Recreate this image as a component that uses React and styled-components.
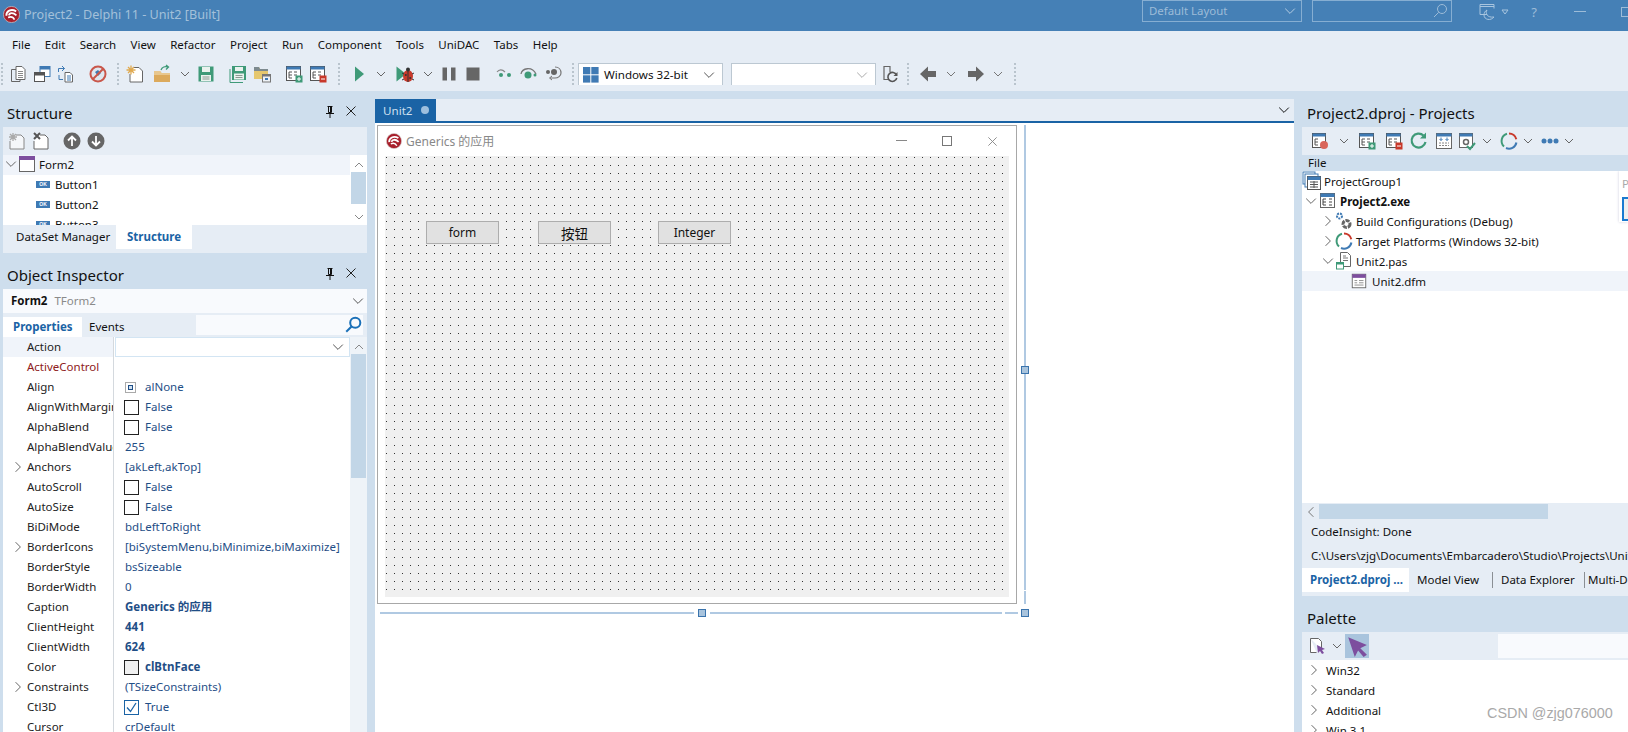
import React from "react";
import styled, { createGlobalStyle } from "styled-components";

const FONT = `"Noto Sans", "Noto Sans CJK SC", sans-serif`;
const C = { title: "#4580b6", band: "#e6edf5", dock: "#cedeed", soft: "#f0f4fa", blue: "#1a63a5", val: "#1f4e86", thumb: "#c2d6e7" };

const Global = createGlobalStyle`
  html, body { margin: 0; padding: 0; height: 100%; overflow: hidden; }
  body { font-family: ${FONT}; font-size: 11.5px; color: #111; background: ${C.dock}; }
  #root { height: 100%; }
  * { box-sizing: border-box; }
  svg { display: block; flex: none; }
`;

const Page = styled.div`height: 732px; width: 1628px; display: flex; flex-direction: column; position: relative; overflow: hidden;`;

/* title bar */
const TitleBar = styled.header`height: 31px; width: calc(100% + 8px); background: ${C.title}; display: flex; align-items: flex-start; flex: none; padding-left: 3px;`;
const LogoSlot = styled.div`width: 21px; height: 28px; display: flex; align-items: center;`;
const AppTitle = styled.div`color: #a3c0da; font-size: 12.6px; line-height: 29px;`;
const TitleSpacer = styled.div`flex: 1;`;
const LayoutCombo = styled.div`width: 160px; height: 22px; border: 1px solid #86aed2; color: #9dbcd8; font-size: 11.4px; line-height: 20px; padding-left: 6px; display: flex; justify-content: space-between; align-items: center; padding-right: 5px; flex: none;`;
const SearchCombo = styled.div`width: 140px; height: 22px; margin-left: 10px; border: 1px solid #86aed2; display: flex; justify-content: flex-end; align-items: center; padding-right: 3px; flex: none;`;
const CaptionBtn = styled.div`width: ${p => p.$w}px; margin-left: ${p => p.$ml || 0}px; height: 24px; display: flex; align-items: center; justify-content: center; color: #9dbcd8; font-size: 13px; flex: none;`;

/* menu and toolbar */
const TopBand = styled.div`height: 60px; background: ${C.band}; flex: none;`;
const MenuBar = styled.nav`height: 27px; display: flex; align-items: center; padding: 0 0 0 12px; gap: 14.4px;`;
const MenuItem = styled.span`color: #111;`;
const ToolBar = styled.div`height: 33px; display: flex; align-items: flex-start; padding-top: 5px;`;
const Tool = styled.div`width: ${p => p.$w || 24}px; height: 22px; margin-left: ${p => p.$ml || 0}px; display: flex; align-items: center; justify-content: center;`;
const Sep = styled.div`width: 2px; height: 22px; margin-left: ${p => p.$ml || 0}px; background: repeating-linear-gradient(#b9c4cd 0 2px, transparent 2px 4px);`;
const Combo = styled.div`width: 145px; height: 22px; margin-left: ${p => p.$ml || 0}px; background: #fff; border: 1px solid #bcc8d2; border-bottom: 0; display: flex; align-items: center; padding: 0 7px 0 4px; gap: 5px; font-size: 11.6px;`;
const ComboText = styled.span`flex: 1; color: #111; white-space: nowrap; margin-bottom: 1px;`;

/* workspace */
const Workspace = styled.div`flex: 1; min-height: 0; display: flex; padding-top: 8px; background: ${C.dock};`;
const LeftDock = styled.aside`width: 375px; flex: none; padding: 0 8px 0 3px; display: flex; flex-direction: column;`;
const RightDock = styled.aside`flex: 1; min-width: 0; padding-left: 8px; display: flex; flex-direction: column;`;
const DockHead = styled.div`height: ${p => p.$h}px; padding: ${p => p.$pt || 0}px 0 0 ${p => p.$pl}px; display: flex; align-items: center; justify-content: space-between; font-size: 15px; color: #111; flex: none;`;
const HeadBtns = styled.div`display: flex; gap: 9px; padding-right: 10px; margin-bottom: 2px;`;
const IconBar = styled.div`height: 28px; background: ${C.band}; display: flex; align-items: center; flex: none;`;
const IconSlot = styled.div`width: ${p => p.$w || 24}px; margin-left: ${p => p.$ml || 0}px; height: 24px; display: flex; align-items: center; justify-content: center; background: ${p => p.$on ? "#a9c4dd" : "transparent"};`;
const TreeArea = styled.div`height: ${p => p.$h}px; background: #fff; display: flex; overflow: hidden; flex: none;`;
const TreeBody = styled.div`flex: 1; min-width: 0;`;
const Row = styled.div`height: 20px; display: flex; align-items: center; padding-left: ${p => p.$indent || 0}px; background: ${p => p.$soft ? C.soft : "transparent"}; font-weight: ${p => p.$bold ? 700 : 400}; color: #111; white-space: nowrap;`;
const StructRow = styled(Row)`padding-bottom: 2px;`;
const RowChevron = styled.div`width: ${p => p.$w || 16}px; margin-right: ${p => p.$mr || 0}px; display: flex; justify-content: center; flex: none;`;
const RowIcon = styled.div`width: ${p => p.$w || 16}px; margin-right: ${p => p.$mr ?? 4}px; display: flex; justify-content: center; flex: none;`;
const VScroll = styled.div`width: 17px; flex: none; background: ${p => p.$track || "#fff"}; display: flex; flex-direction: column; align-items: center; padding-top: 5px;`;
const Thumb = styled.div`width: 15px; height: ${p => p.$h}px; margin-top: ${p => p.$mt}px; margin-bottom: ${p => p.$mb || 0}px; background: ${C.thumb}; flex: none;`;
const TabBar = styled.div`height: ${p => p.$h}px; background: ${C.band}; display: flex; align-items: flex-start; flex: none; overflow: hidden; white-space: nowrap;`;
const DockTab = styled.div`height: 24px; line-height: 23px; width: ${p => p.$w}px; padding-left: ${p => p.$pl}px; background: ${p => p.$on ? "#fff" : "transparent"}; color: ${p => p.$on ? C.blue : "#111"}; font-weight: ${p => p.$on ? 700 : 400}; flex: none;`;
const TabRule = styled.div`width: 1px; height: 16px; margin: 4px ${p => p.$mr}px 0 0; background: #8a8f94; flex: none;`;

/* object inspector */
const Selector = styled.div`height: 24px; background: #f8fafd; display: flex; align-items: center; padding: 0 3px 0 8px; flex: none;`;
const SelName = styled.b`font-weight: 700; margin-right: 7px; margin-bottom: 1px;`;
const SelType = styled.span`color: #8a8a8a; flex: 1; margin-bottom: 1px;`;
const InspTabs = styled.div`height: 24px; background: ${C.band}; display: flex; align-items: flex-end; flex: none;`;
const InspTab = styled.div`height: 20px; line-height: 19px; width: ${p => p.$w}px; padding-left: ${p => p.$pl}px; background: ${p => p.$on ? "#fff" : "transparent"}; color: ${p => p.$on ? C.blue : "#111"}; font-weight: ${p => p.$on ? 700 : 400};`;
const InspSearch = styled.div`width: 167px; height: 20px; margin: 0 4px 2px auto; background: #f8fafd; display: flex; align-items: center; justify-content: flex-end; padding-right: 1px;`;
const GridWrap = styled.div`flex: 1; min-height: 0; display: flex; overflow: hidden; background: #fff;`;
const GridBody = styled.div`flex: 1; min-width: 0;`;
const PropRow = styled.div`height: 20px; display: grid; grid-template-columns: 111px 1fr;`;
const PropName = styled.div`position: relative; background: ${p => p.$soft ? C.soft : "#fff"}; border-right: 1px solid #d4d9de; padding-left: 24px; overflow: hidden; white-space: nowrap; line-height: 19px; color: ${p => p.$red ? "#8e2020" : "#222"};`;
const PropChevron = styled.div`position: absolute; left: 9px; top: 4px;`;
const PropValue = styled.div`display: flex; align-items: center; padding-left: 11px; gap: 6px; color: ${C.val}; font-weight: ${p => p.$bold ? 700 : 400}; white-space: nowrap; min-width: 0;`;
const ValueText = styled.span`margin-bottom: 2px; margin-left: ${p => p.$ml || 0}px;`;
const ActionEditor = styled.div`height: 20px; margin-left: 1px; border: 1px solid #d3e5f3; display: flex; align-items: center; justify-content: flex-end; padding-right: 5px;`;
const Check = styled.div`width: 15px; height: 15px; margin-left: -1px; border: 1px solid ${p => p.$on ? "#1a63a5" : "#222"}; background: ${p => p.$fill || "#fff"}; display: flex; align-items: center; justify-content: center; flex: none;`;

/* editor */
const Editor = styled.main`width: 919px; flex: none; display: flex; flex-direction: column; background: #fff; min-height: 0;`;
const EditorTabs = styled.div`height: 24px; background: ${C.band}; border-bottom: 2px solid ${C.blue}; display: flex; justify-content: space-between; flex: none;`;
const UnitTab = styled.div`width: 61px; height: 22px; background: ${C.blue}; color: #cfe0f0; display: flex; align-items: center; padding-left: 8px; gap: 9px; font-size: 11.6px;`;
const TabDot = styled.span`width: 8px; height: 8px; border-radius: 50%; background: #9dbfde;`;
const TabMenu = styled.div`width: 20px; display: flex; align-items: center; justify-content: center;`;
const Designer = styled.div`position: relative; flex: 1; min-height: 0; padding: 2px 0 0 2px;`;
const FormWindow = styled.div`width: 640px; height: 479px; border: 1px solid #a8a8a8; background: #fff; display: flex; flex-direction: column;`;
const FormCaption = styled.div`height: 30px; display: flex; align-items: center; padding-left: 8px; flex: none;`;
const FormTitle = styled.span`color: #888; font-size: 12px; margin-left: 4px; flex: 1;`;
const WinBtn = styled.div`width: ${p => p.$w}px; display: flex; justify-content: center; margin-right: ${p => p.$mr || 0}px;`;
const Client = styled.div`position: relative; width: 624px; height: 441px; margin-left: 7px; background-color: #f0f0f0; background-image: conic-gradient(from 270deg at 1px 1px, #333 25%, transparent 0); background-size: 8px 8px; background-position: 1px 1px;`;
const DesignButton = styled.div`position: absolute; left: ${p => p.$x}px; top: 65px; width: 73px; height: 23px; border: 1px solid #adadad; background: #e1e1e1; display: flex; align-items: center; justify-content: center; color: #111; font-size: ${p => p.$size || 12}px;`;
const GuideV = styled.div`position: absolute; left: 649px; top: ${p => p.$y}px; width: 2px; height: ${p => p.$h}px; background: #b0c9e2;`;
const GuideH = styled.div`position: absolute; top: 489px; left: ${p => p.$x}px; width: ${p => p.$w}px; height: 2px; background: #b0c9e2;`;
const Handle = styled.div`position: absolute; left: ${p => p.$x}px; top: ${p => p.$y}px; width: 8px; height: 8px; background: #a9c4dd; border: 1px solid #3b74ad;`;

/* right */
const FileHead = styled.div`height: 16px; line-height: 16px; padding-left: 6px; flex: none;`;
const ProjectTree = styled.div`height: 332px; background: #fff; position: relative; flex: none; overflow: hidden;`;
const Popup = styled.div`position: absolute; right: 0; top: 0; width: 9px; height: 51px; background: #fff; box-shadow: 0 0 3px #ccd; color: #aaa; padding: 5px 0 0 3px; overflow: hidden;`;
const PopupBox = styled.div`position: absolute; left: 3px; top: 26px; width: 20px; height: 24px; border: 2px solid #1a7ad0; background: #eee;`;
const HScroll = styled.div`height: 17px; background: ${C.band}; display: flex; align-items: center; flex: none;`;
const HArrow = styled.div`width: 17px; display: flex; justify-content: center;`;
const HThumb = styled.div`width: 229px; height: 15px; background: ${C.thumb};`;
const InfoLine = styled.div`height: ${p => p.$h}px; background: ${C.band}; line-height: ${p => p.$h}px; padding-left: 9px; white-space: nowrap; overflow: hidden; flex: none;`;
const PalSearch = styled.div`width: 130px; height: 24px; margin-left: auto; background: #f8fafd;`;
const PalList = styled.div`flex: 1; min-height: 0; background: #fff; overflow: hidden;`;
const Watermark = styled.div`position: absolute; left: 1487px; top: 705px; font-family: "Liberation Sans", sans-serif; font-size: 14.4px; color: #a9a9a9; white-space: nowrap;`;

/* drawings */
const Chev = ({ d = "down", c = "#666", s = 10 }) => {
  const p = { down: "M1 3l4 4 4-4", up: "M1 7l4-4 4 4", right: "M3 1l4 4-4 4", left: "M7 1L3 5l4 4" }[d];
  return <svg width={s} height={s} viewBox="0 0 10 10" fill="none" stroke={c} strokeWidth={10 / s}><path d={p} /></svg>;
};
const Logo = ({ s = 17 }) => (
  <svg width={s} height={s} viewBox="0 0 20 20" fill="none">
    <circle cx="10" cy="10" r="9.5" fill="#a81f2b" stroke="#d3cccc" strokeWidth=".8" />
    <path d="M4 11.500C3.500 6 9.500 2.800 15.500 6.300" stroke="#fff" strokeWidth="2.200" />
    <path d="M7 11C7.500 8 11.500 7.200 15.800 11" stroke="#fff" strokeWidth="2.200" />
    <path d="M6 13.500c3-1.300 6-.5 7.500 2.500" stroke="#fff" strokeWidth="1.800" />
  </svg>
);
const Pin = () => <svg width="12" height="14" viewBox="0 0 12 14" fill="none" stroke="#111"><path d="M3.500 1.500h5M4.500 1.500v6h3v-6" /><path d="M6.500 2v5" strokeWidth="1" /><path d="M2 8.500h8M6 8.500V13" /></svg>;
const Cross = ({ c = "#222", s = 12 }) => <svg width={s} height={s} viewBox="0 0 12 12" stroke={c} fill="none"><path d="M1.500 1.500l9 9M10.500 1.500l-9 9" /></svg>;
const Magnifier = ({ c = "#9dbcd8", w = 1, s = 16 }) => <svg width={s} height={s} viewBox="0 0 16 16" fill="none" stroke={c} strokeWidth={w}><circle cx="10" cy="6" r="4.500" /><path d="M6.700 9.300L2 14" /></svg>;
const Svg = ({ children, s = 20 }) => <svg width={s} height={s} viewBox="0 0 20 20" fill="none">{children}</svg>;

const I = {
  docs: <Svg><path d="M8 2.500h6l3 3v10H8z" fill="#fff" stroke="#666" /><path d="M3.500 5.500H8M3.500 5.500v12H12v-2" stroke="#666" /><path d="M10 7.500h5M10 9.500h5M10 11.500h5M10 13.500h5" stroke="#888" /></Svg>,
  win: <Svg><rect x="8" y="2.500" width="10" height="10" fill="#fff" stroke="#3f7ab4" /><rect x="8" y="2.500" width="10" height="3" fill="#3f7ab4" /><rect x="2.500" y="8.500" width="10" height="9" fill="#fff" stroke="#555" /><rect x="2.500" y="8.500" width="10" height="3" fill="#555" /></Svg>,
  sync: <Svg><path d="M2.500 8V4.500h6M6 2L8.500 4.500 6 7" stroke="#3f7ab4" /><path d="M9 8.500h5l2.500 2.500v7H9z" fill="#fff" stroke="#666" /><path d="M11 12h4M11 14h4M11 16h4" stroke="#3f7ab4" /><path d="M3 11v4.500h4" stroke="#3f7ab4" /></Svg>,
  forbid: <Svg><circle cx="10" cy="10" r="7.500" fill="#dfe7ef" stroke="#c9574b" strokeWidth="2" /><path d="M7 8l3-2 3 3-3 3z" fill="#3f7ab4" /><path d="M5 15L15 5" stroke="#c9574b" strokeWidth="2" /></Svg>,
  newf: <Svg><path d="M9 3.500h5l3.500 3.500v11H5V10" fill="#fff" stroke="#666" /><path d="M6 1.500v9M1.500 6h9M3 3l6 6M9 3l-6 6" stroke="#e0a94f" strokeWidth="1.300" /></Svg>,
  open: <Svg><path d="M2 7h6l1.500 2H18v9H2z" fill="#dcaa5c" /><path d="M2 7h6l1.500 2H18v2H2z" fill="#e8c78e" /><path d="M9 6c1-3 4-4 7-3M14 1l2.500 2L14 5.500" stroke="#3f9a78" strokeWidth="1.300" /></Svg>,
  save: <Svg><rect x="2.500" y="2.500" width="15" height="15" fill="#3f9a78" /><rect x="6" y="3" width="8" height="5" fill="#eaf2ee" /><rect x="5" y="11" width="10" height="6" fill="#eaf2ee" /><path d="M6.500 13h7M6.500 15h7" stroke="#8a9a92" /></Svg>,
  saveall: <Svg><rect x="4" y="2" width="14" height="14" fill="#3f9a78" /><path d="M2 5v13.500h13" stroke="#3f9a78" /><rect x="7" y="3" width="8" height="4" fill="#eaf2ee" /><rect x="6" y="9.500" width="10" height="6" fill="#eaf2ee" /><path d="M7.500 11.500h7M7.500 13.500h7" stroke="#8a9a92" /></Svg>,
  folderwin: <Svg><path d="M2 3h5l1 2h8v10H2z" fill="#e5c76e" /><path d="M2 3h5l1 2h8v2H2z" fill="#7d8a8f" /><rect x="10.500" y="10.500" width="8" height="7.500" fill="#eef2f6" stroke="#777" /><rect x="10.500" y="10.500" width="8" height="2" fill="#777" /><rect x="13" y="14" width="3" height="2" fill="#3f7ab4" /></Svg>,
  add: <Svg><rect x="2.500" y="2.500" width="14" height="14" fill="#fff" stroke="#555" /><rect x="2.500" y="2.500" width="14" height="3" fill="#3f7ab4" /><path d="M5 8v6h3M5 8h3M5 11h3M10 8h3M10 11h3" stroke="#555" /><rect x="11.500" y="11.500" width="7" height="7" fill="#3f9a78" /><path d="M13 15h4M15 13v4" stroke="#fff" /></Svg>,
  rem: <Svg><rect x="2.500" y="2.500" width="14" height="14" fill="#fff" stroke="#555" /><rect x="2.500" y="2.500" width="14" height="3" fill="#3f7ab4" /><path d="M5 8v6h3M5 8h3M5 11h3M10 8h3M10 11h3" stroke="#555" /><rect x="11.500" y="11.500" width="7" height="7" fill="#c8392b" /><path d="M13 15h4" stroke="#fff" /></Svg>,
  run: <Svg><path d="M6 2.500L15 10l-9 7.500z" fill="#3f9a78" /></Svg>,
  debug: <Svg><path d="M1.500 2.500L11 10l-9.500 7.500z" fill="#3f9a78" /><ellipse cx="13" cy="12" rx="5" ry="6" fill="#c8392b" /><path d="M13 6v12" stroke="#333" /><circle cx="13" cy="5.500" r="2" fill="#333" /><path d="M7 9l2 1M19 9l-2 1M7 16l2-1M19 16l-2-1" stroke="#333" /><circle cx="10.800" cy="11" r="1" fill="#333" /><circle cx="15.200" cy="14" r="1" fill="#333" /></Svg>,
  pause: <Svg><rect x="3.500" y="3.500" width="4.500" height="13" fill="#666" /><rect x="12" y="3.500" width="4.500" height="13" fill="#666" /></Svg>,
  stop: <Svg><rect x="3.500" y="3.500" width="13" height="13" fill="#666" /></Svg>,
  step1: <Svg><path d="M2 8c2-2.500 5-3 8 0" stroke="#888" strokeWidth="1.200" /><circle cx="6" cy="11" r="2" fill="#3f9a78" /><circle cx="14" cy="11" r="2" fill="#3f9a78" /></Svg>,
  step2: <Svg><path d="M2 10c1-6 11-8 15 0" stroke="#777" strokeWidth="1.300" /><circle cx="9" cy="11" r="3.500" fill="#3f9a78" /><circle cx="16" cy="11" r="1.500" fill="#3f9a78" /></Svg>,
  step3: <Svg><path d="M12 3c4 0 6 3 6 6s-3 5-6 5H7" stroke="#777" strokeWidth="1.200" /><path d="M9 12l-2.500 2L9 16" stroke="#777" /><circle cx="5" cy="8" r="2" fill="#666" /><circle cx="11" cy="8" r="3" fill="#666" /></Svg>,
  refresh: <Svg><path d="M10 8V2.500H4v13h4" stroke="#666" strokeWidth="1.200" /><path d="M16.500 11a4.500 4.500 0 1 0 .3 3" stroke="#555" strokeWidth="1.600" /><path d="M17.500 8v4h-4z" fill="#555" /></Svg>,
  back: <Svg><path d="M1 10l8-7.500V7h8v6H9v4.500z" fill="#666" /></Svg>,
  forward: <Svg><path d="M19 10l-8-7.500V7H3v6h8v4.500z" fill="#666" /></Svg>,
  windows: <svg width="16" height="16" viewBox="0 0 16 16" fill="#3f7ab4"><rect width="7.300" height="7.300" /><rect x="8.300" width="7.300" height="7.300" /><rect y="8.300" width="7.300" height="7.300" /><rect x="8.300" y="8.300" width="7.300" height="7.300" /></svg>,
  layoutTheme: <Svg><path d="M10 12.500H3V2.500h14v4" stroke="#a8c5df" /><path d="M3 4.500h14" stroke="#a8c5df" /><path d="M10 8c-2 3 0 8 7 7-3 4-10 3-10-2 0-2 1-4 3-5z" stroke="#a8c5df" /></Svg>,
  sNew: <Svg><path d="M9 4h5l3 3v11H3V10" fill="#f5f7fa" stroke="#888" /><path d="M6 2v8M2 6h8M3 3l6 6M9 3l-6 6" stroke="#aaa" strokeWidth="1.300" /></Svg>,
  sDel: <Svg><path d="M9 4h5l3 3v11H3V10" fill="#fff" stroke="#666" /><path d="M3 2l6 6M9 2L3 8" stroke="#555" strokeWidth="2" /></Svg>,
  up: <Svg><circle cx="10" cy="10" r="8.500" fill="#666" /><path d="M10 15V6M6 9.500L10 5.500l4 4" stroke="#fff" strokeWidth="1.800" /></Svg>,
  down: <Svg><circle cx="10" cy="10" r="8.500" fill="#666" /><path d="M10 5v9M6 10.500l4 4 4-4" stroke="#fff" strokeWidth="1.800" /></Svg>,
  form: <svg width="16" height="16" viewBox="0 0 16 16"><rect x=".5" y=".5" width="15" height="15" fill="#fff" stroke="#666" /><rect width="16" height="4" fill="#7d4e9e" /></svg>,
  okBtn: <svg width="14" height="7" viewBox="0 0 14 7"><rect width="14" height="7" fill="#3f7ab4" /><text x="7" y="5.400" fontSize="5" fontWeight="700" fill="#fff" textAnchor="middle" fontFamily="Liberation Sans">OK</text></svg>,
  align: <svg width="11" height="11" viewBox="0 0 11 11"><rect x=".5" y=".5" width="10" height="10" fill="none" stroke="#555" strokeDasharray="1 1" /><rect x="3.500" y="3.500" width="4" height="4" fill="#cfe0ef" stroke="#1f4e86" /></svg>,
  tick: <svg width="13" height="13" viewBox="0 0 13 13" fill="none" stroke="#1a63a5" strokeWidth="1.300"><path d="M2 6.500l3.500 4L11 2" /></svg>,
  proj: <Svg><rect x="2.500" y="2.500" width="14" height="14" fill="#fff" stroke="#666" /><rect x="2.500" y="2.500" width="14" height="3.500" fill="#3f7ab4" /><path d="M5 8v6h3M5 8h3M5 11h3M11 8h3M11 11h3M11 14h3" stroke="#444" /></Svg>,
  group: <Svg><rect x="1" y="1" width="12" height="12" fill="#fff" stroke="#3f7ab4" /><rect x="3" y="3" width="13" height="13" fill="#fff" stroke="#3f7ab4" /><rect x="5.500" y="5.500" width="13" height="13" fill="#fff" stroke="#555" /><rect x="5.500" y="5.500" width="13" height="3.500" fill="#3f7ab4" /><path d="M8 11h8M8 13.500h8M8 16h8M12 10v7" stroke="#555" /></Svg>,
  gears: <Svg><circle cx="5.500" cy="5" r="2.500" stroke="#3f7ab4" strokeWidth="2" strokeDasharray="2 1" /><circle cx="12.500" cy="13" r="3.500" stroke="#666" strokeWidth="3" strokeDasharray="4 1" /></Svg>,
  ring: <Svg><path d="M10 2.500A7.500 7.500 0 0 1 17.300 8.300" stroke="#c8392b" strokeWidth="2" /><path d="M17.400 11.500A7.500 7.500 0 0 1 7 17" stroke="#3f7ab4" strokeWidth="2" /><path d="M5 15.500A7.500 7.500 0 0 1 8 2.800" stroke="#3f9a78" strokeWidth="2" /></Svg>,
  pas: <Svg><path d="M6.500 1.500h7l3 3v11h-10z" fill="#fff" stroke="#666" /><path d="M9 7h5M9 9.500h5M9 5h3" stroke="#777" /><rect x="2.500" y="11.500" width="7" height="6.500" fill="#fff" stroke="#3f9a78" /><rect x="2.500" y="11.500" width="7" height="2" fill="#3f9a78" /></Svg>,
  dfm: <Svg s={18}><rect x="2.500" y="2.500" width="15" height="15" fill="#fff" stroke="#666" /><rect x="2.500" y="2.500" width="15" height="4" fill="#7d4e9e" /><path d="M5 9.500h3M10 9.500h5M5 12h3M10 12h5M5 14.500h10" stroke="#888" /></Svg>,
  pRun: <Svg><rect x="2.500" y="2.500" width="13" height="14" fill="#fff" stroke="#555" /><rect x="2.500" y="2.500" width="13" height="3" fill="#3f7ab4" /><path d="M5 8v6h3M5 8h3M5 11h3" stroke="#555" /><circle cx="14" cy="14" r="4" fill="#d9655a" /></Svg>,
  reload: <Svg><path d="M16.500 11a7 7 0 1 1-2-6.500" stroke="#3f9a78" strokeWidth="2.200" /><path d="M17 1.500v6h-6z" fill="#3f9a78" /></Svg>,
  buildAll: <Svg><rect x="2.500" y="2.500" width="15" height="15" fill="#fff" stroke="#666" /><rect x="2.500" y="2.500" width="15" height="3" fill="#3f7ab4" /><path d="M7 6.500v3M5.500 8L7 9.500 8.500 8M13 6.500v3M11.500 8L13 9.500 14.500 8" stroke="#3f7ab4" /><path d="M5 12h10M5 14.500h10" stroke="#888" strokeDasharray="2 1" /></Svg>,
  check: <Svg><rect x="2.500" y="2.500" width="13" height="14" fill="#fff" stroke="#666" /><rect x="2.500" y="2.500" width="13" height="3" fill="#3f7ab4" /><circle cx="9" cy="11" r="2.500" stroke="#666" strokeWidth="1.500" /><path d="M10 15l3 3 5-6" stroke="#3f9a78" strokeWidth="2" /></Svg>,
  dots: <svg width="18" height="6" viewBox="0 0 18 6" fill="#3f7ab4"><circle cx="3" cy="3" r="2.500" /><circle cx="9" cy="3" r="2.500" /><circle cx="15" cy="3" r="2.500" /></svg>,
  palDoc: <Svg><path d="M3.500 2.500h8l3 3v8M3.500 2.500v14h6" fill="#fff" stroke="#666" /><path d="M10 9l8 4-3 1 2 3-2 1-2-3-2 2z" fill="#7d4e9e" /></Svg>,
  arrow: <Svg s={22}><path d="M2 2l17 7-6 3 6 6-3 2-5-6-3 6z" fill="#7d4e9e" /></Svg>,
};

const rows = [
  { n: "ActiveControl", red: 1 },
  { n: "Align", icon: I.align, v: "alNone", ml: 3 },
  { n: "AlignWithMargins", box: 1, v: "False" },
  { n: "AlphaBlend", box: 1, v: "False" },
  { n: "AlphaBlendValue", v: "255" },
  { n: "Anchors", exp: 1, v: "[akLeft,akTop]" },
  { n: "AutoScroll", box: 1, v: "False" },
  { n: "AutoSize", box: 1, v: "False" },
  { n: "BiDiMode", v: "bdLeftToRight" },
  { n: "BorderIcons", exp: 1, v: "[biSystemMenu,biMinimize,biMaximize]" },
  { n: "BorderStyle", v: "bsSizeable" },
  { n: "BorderWidth", v: "0" },
  { n: "Caption", b: 1, v: "Generics 的应用" },
  { n: "ClientHeight", b: 1, v: "441" },
  { n: "ClientWidth", b: 1, v: "624" },
  { n: "Color", b: 1, swatch: 1, v: "clBtnFace" },
  { n: "Constraints", exp: 1, v: "(TSizeConstraints)" },
  { n: "Ctl3D", tick: 1, v: "True" },
  { n: "Cursor", v: "crDefault" },
];

const menus = ["File", "Edit", "Search", "View", "Refactor", "Project", "Run", "Component", "Tools", "UniDAC", "Tabs", "Help"];

export default function App() {
  return (
    <Page>
      <Global />
      <TitleBar>
        <LogoSlot><Logo /></LogoSlot>
        <AppTitle>Project2 - Delphi 11 - Unit2 [Built]</AppTitle>
        <TitleSpacer />
        <LayoutCombo>Default Layout<Chev c="#b5cde3" s={12} /></LayoutCombo>
        <SearchCombo><Magnifier /></SearchCombo>
        <CaptionBtn $w={26} $ml={22}>{I.layoutTheme}</CaptionBtn>
        <CaptionBtn $w={10}><svg width="8" height="6" viewBox="0 0 8 6" fill="none" stroke="#a8c5df"><path d="M1 1h6L4 5z" /></svg></CaptionBtn>
        <CaptionBtn $w={20} $ml={14}>?</CaptionBtn>
        <CaptionBtn $w={20} $ml={26}><svg width="12" height="2"><rect width="12" height="1" fill="#9dbcd8" /></svg></CaptionBtn>
        <CaptionBtn $w={20} $ml={26}><svg width="10" height="10"><rect x=".5" y=".5" width="9" height="9" fill="none" stroke="#9dbcd8" /></svg></CaptionBtn>
      </TitleBar>

      <TopBand>
        <MenuBar>{menus.map(m => <MenuItem key={m}>{m}</MenuItem>)}</MenuBar>
        <ToolBar>
          <Sep $ml={1} />
          <Tool $ml={3}>{I.docs}</Tool><Tool>{I.win}</Tool><Tool>{I.sync}</Tool>
          <Tool $ml={8}>{I.forbid}</Tool>
          <Sep $ml={7} />
          <Tool $ml={4}>{I.newf}</Tool><Tool $ml={3}>{I.open}</Tool>
          <Tool $w={12} $ml={5}><Chev /></Tool>
          <Tool $ml={3}>{I.save}</Tool>
          <Tool $ml={8}>{I.saveall}</Tool><Tool>{I.folderwin}</Tool>
          <Tool $ml={8}>{I.add}</Tool><Tool>{I.rem}</Tool>
          <Sep $ml={8} />
          <Tool $ml={7}>{I.run}</Tool>
          <Tool $w={12} $ml={4}><Chev /></Tool>
          <Tool $ml={6}>{I.debug}</Tool>
          <Tool $w={12} $ml={5}><Chev /></Tool>
          <Tool $ml={3}>{I.pause}</Tool><Tool>{I.stop}</Tool>
          <Tool $ml={8}>{I.step1}</Tool><Tool>{I.step2}</Tool><Tool>{I.step3}</Tool>
          <Sep $ml={7} />
          <Combo $ml={4}>{I.windows}<ComboText>Windows 32-bit</ComboText><Chev c="#555" s={12} /></Combo>
          <Combo $ml={8}><ComboText /><Chev c="#aaa" s={12} /></Combo>
          <Tool $ml={2}>{I.refresh}</Tool>
          <Sep $ml={5} />
          <Tool $ml={8}>{I.back}</Tool>
          <Tool $w={12} $ml={4}><Chev c="#777" /></Tool>
          <Tool $ml={6}>{I.forward}</Tool>
          <Tool $w={12} $ml={5}><Chev c="#777" /></Tool>
          <Sep $ml={10} />
        </ToolBar>
      </TopBand>

      <Workspace>
        <LeftDock>
          <DockHead $h={28} $pl={4}>Structure<HeadBtns><Pin /><Cross /></HeadBtns></DockHead>
          <IconBar>
            <IconSlot $ml={2}>{I.sNew}</IconSlot><IconSlot>{I.sDel}</IconSlot>
            <IconSlot $ml={7}>{I.up}</IconSlot><IconSlot>{I.down}</IconSlot>
          </IconBar>
          <TreeArea $h={70}>
            <TreeBody>
              <StructRow $soft><RowChevron $w={16}><Chev s={12} /></RowChevron><RowIcon $mr={4}>{I.form}</RowIcon>Form2</StructRow>
              <StructRow $indent={32}><RowIcon $mr={4}>{I.okBtn}</RowIcon>Button1</StructRow>
              <StructRow $indent={32}><RowIcon $mr={4}>{I.okBtn}</RowIcon>Button2</StructRow>
              <StructRow $indent={32}><RowIcon $mr={4}>{I.okBtn}</RowIcon>Button3</StructRow>
            </TreeBody>
            <VScroll><Chev d="up" c="#888" /><Thumb $mt={2} $h={32} $mb={8} /><Chev c="#888" /></VScroll>
          </TreeArea>
          <TabBar $h={28}>
            <DockTab $w={113} $pl={13}>DataSet Manager</DockTab>
            <DockTab $on $w={76} $pl={11}>Structure</DockTab>
          </TabBar>

          <DockHead $h={36} $pt={8} $pl={4}>Object Inspector<HeadBtns><Pin /><Cross /></HeadBtns></DockHead>
          <Selector><SelName>Form2</SelName><SelType>TForm2</SelType><Chev c="#555" s={12} /></Selector>
          <InspTabs>
            <InspTab $on $w={79} $pl={10}>Properties</InspTab>
            <InspTab $w={60} $pl={7}>Events</InspTab>
            <InspSearch><Magnifier c="#1a70b8" w={1.800} s={18} /></InspSearch>
          </InspTabs>
          <GridWrap>
            <GridBody>
              <PropRow>
                <PropName $soft>Action</PropName>
                <ActionEditor><Chev c="#555" s={12} /></ActionEditor>
              </PropRow>
              {rows.map(r => (
                <PropRow key={r.n}>
                  <PropName $red={r.red}>
                    {r.exp ? <PropChevron><Chev d="right" s={12} /></PropChevron> : null}
                    {r.n}
                  </PropName>
                  <PropValue $bold={r.b}>
                    {r.icon}
                    {r.box ? <Check /> : null}
                    {r.swatch ? <Check $fill="#f0f0f0" /> : null}
                    {r.tick ? <Check $on>{I.tick}</Check> : null}
                    <ValueText $ml={r.ml}>{r.v}</ValueText>
                  </PropValue>
                </PropRow>
              ))}
            </GridBody>
            <VScroll $track="#eef3f8"><Chev d="up" c="#888" /><Thumb $mt={2} $h={124} /></VScroll>
          </GridWrap>
        </LeftDock>

        <Editor>
          <EditorTabs>
            <UnitTab>Unit2<TabDot /></UnitTab>
            <TabMenu><Chev c="#111" s={12} /></TabMenu>
          </EditorTabs>
          <Designer>
            <FormWindow>
              <FormCaption>
                <Logo s={16} />
                <FormTitle>Generics 的应用</FormTitle>
                <WinBtn $w={46}><svg width="11" height="2"><rect width="11" height="1" fill="#888" /></svg></WinBtn>
                <WinBtn $w={46}><svg width="10" height="10"><rect x=".5" y=".5" width="9" height="9" fill="none" stroke="#777" /></svg></WinBtn>
                <WinBtn $w={45} $mr={1}><Cross c="#888" s={11} /></WinBtn>
              </FormCaption>
              <Client>
                <DesignButton $x={41}>form</DesignButton>
                <DesignButton $x={153} $size={13.5}>按钮</DesignButton>
                <DesignButton $x={273}>Integer</DesignButton>
              </Client>
            </FormWindow>
            <GuideV $y={2} $h={465} />
            <GuideV $y={468} $h={13} />
            <GuideH $x={5} $w={314} />
            <GuideH $x={335} $w={292} />
            <GuideH $x={630} $w={13} />
            <Handle $x={323} $y={486} />
            <Handle $x={646} $y={486} />
            <Handle $x={646} $y={243} />
          </Designer>
        </Editor>

        <RightDock>
          <DockHead $h={28} $pl={5}>Project2.dproj - Projects</DockHead>
          <IconBar>
            <IconSlot $ml={6}>{I.pRun}</IconSlot><IconSlot $w={16} $ml={4}><Chev /></IconSlot>
            <IconSlot $ml={3}>{I.add}</IconSlot><IconSlot $ml={3}>{I.rem}</IconSlot>
            <IconSlot $ml={1}>{I.reload}</IconSlot><IconSlot $ml={1}>{I.buildAll}</IconSlot>
            <IconSlot $w={22}>{I.check}</IconSlot><IconSlot $w={14} $ml={2}><Chev /></IconSlot>
            <IconSlot $ml={3}>{I.ring}</IconSlot><IconSlot $w={14}><Chev /></IconSlot>
            <IconSlot $w={20} $ml={5}>{I.dots}</IconSlot><IconSlot $w={14} $ml={2}><Chev /></IconSlot>
          </IconBar>
          <FileHead>File</FileHead>
          <ProjectTree>
            <Row $indent={1}><RowIcon $w={18} $mr={3}>{I.group}</RowIcon>ProjectGroup1</Row>
            <Row $bold $indent={1}><RowChevron $w={16}><Chev s={12} /></RowChevron><RowIcon $w={18} $mr={3}>{I.proj}</RowIcon>Project2.exe</Row>
            <Row $indent={18}><RowChevron $w={15}><Chev d="right" s={12} /></RowChevron><RowIcon $w={18} $mr={3}>{I.gears}</RowIcon>Build Configurations (Debug)</Row>
            <Row $indent={18}><RowChevron $w={15}><Chev d="right" s={12} /></RowChevron><RowIcon $w={18} $mr={3}>{I.ring}</RowIcon>Target Platforms (Windows 32-bit)</Row>
            <Row $indent={18}><RowChevron $w={15}><Chev s={12} /></RowChevron><RowIcon $w={18} $mr={3}>{I.pas}</RowIcon>Unit2.pas</Row>
            <Row $soft $indent={48}><RowIcon $w={18} $mr={4}>{I.dfm}</RowIcon>Unit2.dfm</Row>
            <Popup>P<PopupBox /></Popup>
          </ProjectTree>
          <HScroll><HArrow><Chev d="left" c="#777" s={12} /></HArrow><HThumb /></HScroll>
          <InfoLine $h={24}>CodeInsight: Done</InfoLine>
          <InfoLine $h={24}>C:\Users\zjg\Documents\Embarcadero\Studio\Projects\Unit2.pas</InfoLine>
          <TabBar $h={28}>
            <DockTab $on $w={107} $pl={8}>Project2.dproj ...</DockTab>
            <DockTab $w={83} $pl={8}>Model View</DockTab>
            <TabRule $mr={8} />
            <DockTab $w={83} $pl={0}>Data Explorer</DockTab>
            <TabRule $mr={3} />
            <DockTab $w={120} $pl={0}>Multi-Device Preview</DockTab>
          </TabBar>
          <DockHead $h={36} $pt={8} $pl={5}>Palette</DockHead>
          <IconBar>
            <IconSlot $ml={3}>{I.palDoc}</IconSlot><IconSlot $w={14} $ml={1}><Chev /></IconSlot>
            <IconSlot $on $ml={1}>{I.arrow}</IconSlot>
            <PalSearch />
          </IconBar>
          <PalList>
            {["Win32", "Standard", "Additional", "Win 3.1"].map(n => (
              <Row key={n} $indent={5}><RowChevron $w={14} $mr={5}><Chev d="right" s={12} /></RowChevron>{n}</Row>
            ))}
          </PalList>
        </RightDock>
      </Workspace>
      <Watermark>CSDN @zjg076000</Watermark>
    </Page>
  );
}
